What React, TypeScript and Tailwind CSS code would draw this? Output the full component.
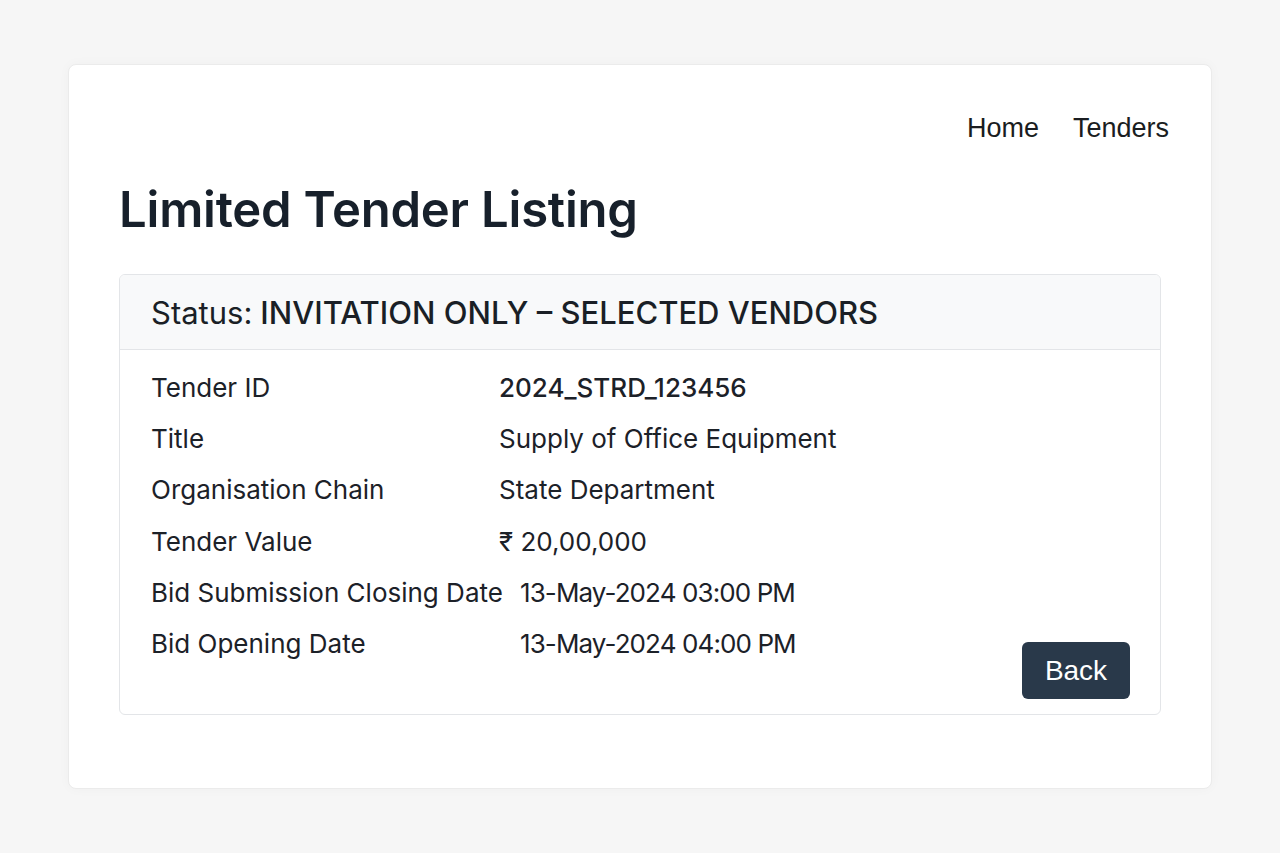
import React from "react";

const rows: { label: string; value: string; bold?: boolean; indent?: boolean }[] = [
  { label: "Tender ID", value: "2024_STRD_123456", bold: true },
  { label: "Title", value: "Supply of Office Equipment" },
  { label: "Organisation Chain", value: "State Department" },
  { label: "Tender Value", value: "₹ 20,00,000" },
  { label: "Bid Submission Closing Date", value: "13-May-2024 03:00 PM", indent: true },
  { label: "Bid Opening Date", value: "13-May-2024 04:00 PM", indent: true },
];

export default function App() {
  return (
    <div
      className="w-[1280px] h-[853px] bg-[#f6f6f6] pt-[64px] pl-[68px]"
      style={{ fontFamily: "Inter, 'Noto Sans', sans-serif" }}
    >
      <div className="w-[1144px] h-[725px] bg-white border border-[#ebebeb] rounded-[8px] shadow-[0_0_12px_rgba(0,0,0,0.03)] px-[50px] flex flex-col">
        <nav
          className="flex justify-end gap-[34px] pt-[44px] mr-[-8px] text-[27px] leading-[38px] text-[#1a1d21]"
          style={{ fontFamily: "'Liberation Sans', Arial, sans-serif" }}
        >
          <span>Home</span>
          <span>Tenders</span>
        </nav>
        <h1 className="mt-[34px] text-[49px] leading-[58px] font-semibold text-[#17202b] tracking-[-0.2px]">
          Limited Tender Listing
        </h1>
        <div className="mt-[35px] border border-[#e3e5e8] rounded-[6px] overflow-hidden">
          <div className="h-[75px] bg-[#f8f9fa] border-b border-[#e3e5e8] flex items-center px-[31px] text-[31px] text-[#1a1f26] pt-[2px]">
            <span className="font-normal">Status:</span>
            <span className="font-medium ml-[8px]">INVITATION ONLY – SELECTED VENDORS</span>
          </div>
          <div className="flex justify-between items-end pl-[31px] pr-[30px] pb-[15px] pt-[12px]">
            <div className="flex flex-col pb-[30px] text-[26px] text-[#1c2128]">
              {rows.map((r) => (
                <div key={r.label} className="h-[51.2px] flex items-center">
                  <span className="w-[348px] shrink-0 whitespace-nowrap">{r.label}</span>
                  <span
                    className={
                      (r.indent ? "ml-[21px] tracking-[-0.9px] " : "") + (r.bold ? "font-medium" : "")
                    }
                  >
                    {r.value}
                  </span>
                </div>
              ))}
            </div>
            <button
              className="w-[108px] h-[57px] bg-[#29394a] rounded-[6px] text-white text-[28px] flex items-center justify-center"
              style={{ fontFamily: "'Liberation Sans', Arial, sans-serif" }}
            >
              Back
            </button>
          </div>
        </div>
      </div>
    </div>
  );
}
